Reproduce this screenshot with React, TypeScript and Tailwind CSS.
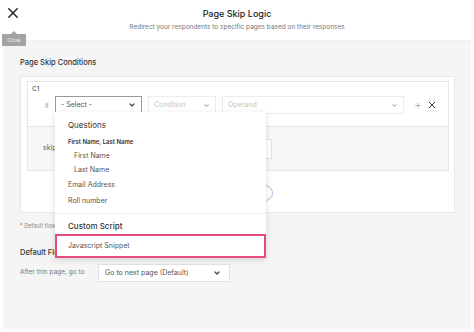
import React from 'react';

function Chevron({ className = '' }: { className?: string }) {
  return (
    <svg viewBox="0 0 10 10" className={className} fill="none" stroke="currentColor" strokeWidth="1.6" strokeLinecap="round" strokeLinejoin="round">
      <path d="M2.5 3.8 5 6.3 7.5 3.8" />
    </svg>
  );
}

function Cross({ className = '' }: { className?: string }) {
  return (
    <svg viewBox="0 0 10 10" className={className} fill="none" stroke="currentColor" strokeWidth="1.2" strokeLinecap="round">
      <path d="M1.5 1.5 8.5 8.5M8.5 1.5 1.5 8.5" />
    </svg>
  );
}

export default function App() {
  return (
    <div className="relative w-[474px] h-[332px] overflow-hidden bg-white text-[#333]" style={{ fontFamily: 'Inter, "Noto Sans", sans-serif' }}>
      {/* header */}
      <div className="relative h-[40px] flex flex-col items-center pt-[7px] shadow-[0_1px_2px_rgba(0,0,0,0.03)]">
        <button className="absolute left-[7px] top-[7px] text-[#222]">
          <Cross className="w-[12px] h-[12px]" />
        </button>
        <h1 className="text-[9px] leading-[13px] font-medium text-[#222]">Page Skip Logic</h1>
        <p className="mt-[2px] text-[6.5px] leading-[10px] text-[#777]">Redirect your respondents to specific pages based on their responses</p>
      </div>

      {/* close tooltip */}
      <div className="absolute left-[2px] top-[31px] z-20">
        <div className="ml-[9px] w-0 h-0 border-x-[3px] border-x-transparent border-b-[3px] border-b-[#a3a3a3]" />
        <div className="w-[24px] h-[12px] rounded-[1px] bg-[#a3a3a3] text-[5px] leading-[12px] text-[#eee] text-center">Close</div>
      </div>

      {/* body */}
      <div className="mx-[3px] h-[289px] bg-[#f5f5f5] pl-[17px] pr-[16px] pt-[18px]">
        <h2 className="text-[7.5px] leading-[10px] font-medium text-[#333]">Page Skip Conditions</h2>

        <div className="mt-[8px] h-[137px] bg-white border border-[#e8e8e8] pl-[6px] pr-[5px] pt-[4px]">
          <div className="h-[90px] border border-[#e6e6e6] flex flex-col">
            <div className="h-[44px] bg-white pl-[4px] pt-[2px]">
              <div className="text-[6.5px] leading-[10px] text-[#444]">C1</div>
              <div className="mt-[2px] flex items-center">
                <span className="w-[23px] pl-[13px] text-[6px] text-[#999]">If</span>
                <div className="w-[87px] h-[18px] border border-[#9a9a9a] bg-white flex items-center justify-between pl-[5px] pr-[5px]">
                  <span className="text-[7px] text-[#555]">- Select -</span>
                  <Chevron className="w-[8px] h-[8px] text-[#444]" />
                </div>
                <div className="ml-[6px] w-[68px] h-[18px] border border-[#ececec] flex items-center justify-between pl-[5px] pr-[5px]">
                  <span className="text-[7px] text-[#c4c4c4]">Condition</span>
                  <Chevron className="w-[7px] h-[7px] text-[#bbb]" />
                </div>
                <div className="ml-[6px] w-[182px] h-[18px] border border-[#ececec] flex items-center justify-between pl-[5px] pr-[5px]">
                  <span className="text-[7px] text-[#c4c4c4]">Operand</span>
                  <Chevron className="w-[7px] h-[7px] text-[#bbb]" />
                </div>
                <span className="ml-[10px] text-[12px] leading-[12px] font-light text-[#aaa]">+</span>
                <Cross className="ml-[6px] w-[8px] h-[8px] text-[#333]" />
              </div>
            </div>
            <div className="flex-1 bg-[#f7f7f7] border-t border-[#e6e6e6] flex items-center pl-[15px]">
              <span className="text-[7px] text-[#666]">skip to</span>
              <div className="ml-[80px] w-[127px] h-[20px] bg-white border border-[#e2e2e2]" />
            </div>
          </div>
          <div className="mt-[14px] ml-[230px] w-[16px] h-[16px] rounded-full border border-[#a9c3e8] bg-white" />
        </div>

        <p className="mt-[9px] text-[5.5px] leading-[8px] text-[#888]">
          <span className="text-[#e53935]">*</span> Default flow applies
        </p>

        <h3 className="mt-[18px] text-[7.5px] leading-[10px] font-medium text-[#333]">Default Flow</h3>
        <div className="mt-[6px] flex items-center">
          <span className="w-[78px] text-[6.5px] text-[#777]">After this page, go to</span>
          <div className="w-[132px] h-[18px] bg-white border border-[#e2e2e2] flex items-center justify-between pl-[6px] pr-[8px]">
            <span className="text-[7px] text-[#555]">Go to next page (Default)</span>
            <Chevron className="w-[8px] h-[8px] text-[#444]" />
          </div>
        </div>
      </div>

      {/* select dropdown menu */}
      <div className="absolute left-[55px] top-[112px] w-[211px] bg-white shadow-[0_2px_6px_rgba(0,0,0,0.14)] z-10">
        <div className="px-[13px] pt-[7px]">
          <div className="text-[8px] leading-[12px] text-[#333]">Questions</div>
          <div className="mt-[6px] text-[6px] leading-[10px] font-semibold text-[#333]">First Name, Last Name</div>
          <div className="mt-[4px] pl-[6px] text-[7px] leading-[10px] text-[#555]">First Name</div>
          <div className="mt-[4px] pl-[6px] text-[7px] leading-[10px] text-[#555]">Last Name</div>
          <div className="mt-[5px] text-[7px] leading-[10px] text-[#555]">Email Address</div>
          <div className="mt-[6px] text-[7px] leading-[10px] text-[#555]">Roll number</div>
        </div>
        <div className="mt-[7px] border-t border-[#eee] px-[13px] pt-[6px] pb-[2px]">
          <div className="text-[8px] leading-[12px] font-medium text-[#333]">Custom Script</div>
        </div>
        <div className="h-[24px] border-2 border-[#e54a82] flex items-center pl-[11px]">
          <span className="text-[7px] text-[#555]">Javascript Snippet</span>
        </div>
      </div>
    </div>
  );
}
